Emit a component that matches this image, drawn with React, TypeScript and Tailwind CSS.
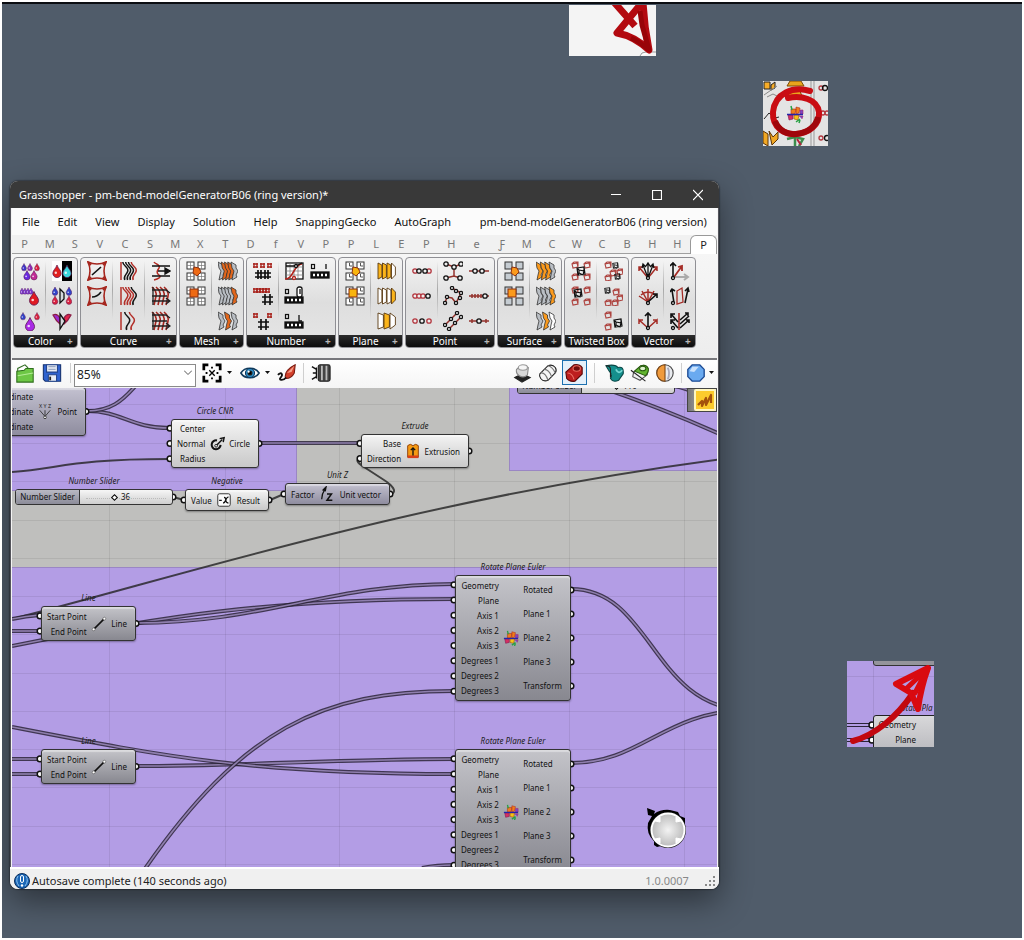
import { Fragment, type ReactNode } from 'react'

type P = { children?: ReactNode }

function Icon({ children }: P) {
  return (
    <svg viewBox="0 0 20 20" className="h-5 w-5 shrink-0" fill="none" stroke="#111" strokeWidth="1.3" aria-hidden="true">
      {children}
    </svg>
  )
}

/* ---------- ribbon icons ---------- */

function Drop({ x, y, s = 1, c }: { x: number; y: number; s?: number; c: string }) {
  return (
    <g transform={`translate(${x} ${y}) scale(${s})`}>
      <path d="M0 -5 C1 -2 3.5 -.5 3.5 2 A3.5 3.5 0 0 1 -3.5 2 C-3.5 -.5 -1 -2 0 -5Z" fill={c} stroke="#5b1650" strokeWidth=".6" />
      <circle cx="-1" cy="1.5" r="1" fill="#fff" fillOpacity=".8" stroke="none" />
    </g>
  )
}

function Waves({ colors }: { colors: string[] }) {
  const step = 13 / (colors.length - 1)
  return (
    <Icon>
      {colors.map((c, i) => (
        <path
          key={i}
          d={`M${i * step} 1 l5 3 0 3 2 3 -2 4 1 2 -5 3 1 -5 1 -4 -2 -3z`}
          fill={c}
          stroke="#333"
          strokeWidth=".8"
        />
      ))}
    </Icon>
  )
}

function Fins({ colors }: { colors: string[] }) {
  const step = 18 / colors.length
  return (
    <Icon>
      {colors.map((c, i) => (
        <path key={i} d={`M${1 + i * step} 2 l${step - 0.6} ${i === colors.length - 1 ? 4 : 2} V${i === colors.length - 1 ? 14 : 16} L${1 + i * step} 18z`} fill={c} stroke="#5a3a12" strokeWidth=".9" />
      ))}
    </Icon>
  )
}

function CurveLines({ colors }: { colors: string[] }) {
  const step = 14 / colors.length
  return (
    <Icon>
      {colors.map((c, i) => (
        <path
          key={i}
          d={i === 0 ? 'M2 1 V19' : `M${1 + i * step} 1 c0 4 6 5 5 9 s-5 5 -3 9`}
          stroke={c}
          strokeWidth="1.5"
        />
      ))}
    </Icon>
  )
}

function Arrows({ dense }: { dense?: boolean }) {
  return (
    <Icon>
      {dense ? (
        <>
          {[1, 5, 9, 13].map((x) => (
            <path key={x} d={`M${x} 1 q5 4 4 9 t-2 9`} stroke="#a5251d" strokeWidth="1.6" />
          ))}
          <path d="M1 4 H15 L19 7 M1 10 H16 M1 15 H19 M2 1v18 M15 12 l4 3 -4 3" stroke="#222" />
        </>
      ) : (
        <>
          <path d="M3 1 C4 3 10 4 8 7 S5 12 8 14 S7 18 3 19" stroke="#b22a22" strokeWidth="1.5" />
          <path d="M1 5 H19 M7 10 H17 M1 15 H19" />
          <path d="M14 7 l5 3 -5 3z" fill="#111" />
        </>
      )}
    </Icon>
  )
}

function Star({ s }: { s?: boolean }) {
  return (
    <Icon>
      <path d="M1 1 Q10 5 19 1 Q15 10 19 19 Q10 15 1 19 Q5 10 1 1Z" stroke="#a5251d" strokeWidth="1.6" />
      <path d="M1 1 l3 3 M19 1 l-3 3 M1 19 l3 -3 M19 19 l-3 -3" stroke="#a5251d" strokeWidth="2" />
      <path d={s ? 'M5 11 C9 11 11 10 14 6' : 'M5 14 L14 6'} strokeWidth="1.6" />
    </Icon>
  )
}

function Tiles({ kind, corner }: { kind: 'mesh' | 'plane' | 'surface'; corner?: boolean }) {
  const accent = { mesh: '#ee6a14', plane: '#f9b50f', surface: '#fb9a1c' }[kind]
  const cells = [[1, 1], [12, 1], [1, 12], [12, 12]]
  return (
    <Icon>
      {cells.map(([x, y]) => (
        <g key={`${x}-${y}`} strokeWidth="1">
          <rect x={x} y={y} width="7" height="7" fill={kind === 'surface' ? '#c5ccd2' : '#fff'} stroke="#333" />
          {kind === 'mesh' && <path d={`M${x + 3.5} ${y} v7 M${x} ${y + 3.5} h7`} stroke="#777" strokeWidth=".7" />}
          {kind === 'plane' && <path d={`M${x + 3.5} ${y + 1} v3 h2.5`} stroke="#555" />}
        </g>
      ))}
      {corner ? (
        <rect x="4" y="3" width="8" height="8" fill={accent} stroke="#8c2f10" strokeWidth="1" />
      ) : (
        <path d="M8 6 l5 1 2 4 -4 4 -4 -3z" fill={accent} stroke="#8c2f10" strokeWidth="1" />
      )}
    </Icon>
  )
}

function Hash({ mode }: { mode: number }) {
  const reds = [[[1, 4], [8, 4], [15, 4]], [[1, 4], [4, 4], [7, 4], [10, 4], [13, 4]], [[1, 4], [15, 4]]][mode]
  const x = [5, 9, 5][mode]
  return (
    <Icon>
      {reds.map(([a, b]) => (
        <path key={a} d={`M${a - 1} ${b - 1}h5 M${a - 1} ${b + 2}h5 M${a} ${b - 2}v5 M${a + 3} ${b - 2}v5`} stroke="#a8231c" strokeWidth="1.3" />
      ))}
      {mode === 0 ? (
        <path d="M2 12h16 M2 16h16 M5 9v9 M8 9v9 M12 9v9 M15 9v9" strokeWidth="1.7" />
      ) : (
        <path d={`M${x} 11h11 M${x} 16h11 M${x + 3} 8v11 M${x + 8} 8v11`} strokeWidth="1.7" />
      )}
    </Icon>
  )
}

function Ruler({ mode }: { mode: number }) {
  return (
    <Icon>
      <rect x="1" y="11" width="18" height="6" fill="#111" />
      <path d="M3 14h2 M7 14h2 M11 14h2 M15 14h2" stroke="#fff" strokeWidth="2.5" />
      <rect x="1.5" y="3.5" width="3" height="4" strokeWidth="1.2" />
      {mode === 1 && <rect x="13" y="1" width="5" height="10" rx="2" fill="#fff" />}
      <path d={mode === 2 ? 'M15 4v6h3' : 'M16 3v5'} />
    </Icon>
  )
}

function Graph() {
  return (
    <Icon>
      <rect x="2" y="2" width="17" height="16" fill="#fff" />
      <path d="M6 2v16 M10 2v16 M14 2v16 M2 6h17 M2 10h17 M2 14h17" stroke="#777" strokeWidth=".7" />
      <path d="M1 18 C10 18 9 4 18 3" stroke="#b3261e" strokeWidth="1.7" />
      <path d="M2 5h10 l6 -3" />
      <circle cx="12" cy="5" r="1.5" fill="#fff" />
      <circle cx="10" cy="17" r="1.5" fill="#fff" stroke="#b3261e" />
    </Icon>
  )
}

function Dots({ pts, line, red = [] }: { pts: number[][]; line?: string; red?: number[] }) {
  return (
    <Icon>
      {line && <path d={line} stroke="#93322c" strokeWidth="1.5" />}
      {pts.map(([x, y], i) => (
        <circle key={i} cx={x} cy={y} r={pts.length > 5 ? 1.6 : 2.2} fill="#eee" stroke={red.includes(i) ? '#b3363e' : '#111'} />
      ))}
    </Icon>
  )
}

function Twist({ mode }: { mode: number }) {
  const cells = mode < 2 ? [[0, 0], [12, 0], [0, 12], [12, 12]] : mode === 4 ? [[1, 0], [1, 12]] : mode === 3 ? [[9, 2], [13, 8], [8, 13], [1, 13]] : [[1, 0], [13, 7], [6, 8], [1, 13]]
  const blacks = [[[5, 5]], [[2, 2]], [[9, 1], [11, 12]], [[1, 1]], [[10, 7]]][mode]
  return (
    <Icon>
      {cells.map(([x, y]) => (
        <path key={`${x}-${y}`} d={`M${x + 1} ${y + 3}l5 -1 1 4 -5 1z M${x + 3} ${y + 1}h4v4 M${x + 1} ${y + 3}l2 -2 M${x + 6} ${y + 2}l1 -1`} stroke="#ae4541" strokeWidth="1.1" />
      ))}
      {blacks.map(([x, y]) => {
        const k = mode < 2 || mode === 4 ? 1 : 0.7
        return (
          <g key={x} transform={`translate(${x} ${y}) scale(${k})`}>
            <path d="M1 2 l7 -1 1 7 -7 1z M3 4 l5 1 -1 4 -4 -2z M1 2l2 2 M8 1v4 M2 9l1 -2" strokeWidth="1.2" />
          </g>
        )
      })}
    </Icon>
  )
}

function Fan({ mode }: { mode: number }) {
  const red = '#a52d27'
  const art = [
    <>
      <path d="M10 17 L1 6 M10 17 L19 6 M1 10V6h4 M19 10V6h-4" stroke={red} strokeWidth="1.5" />
      <path d="M10 17 L5 4 M10 17 V3 M10 17 L15 4 M4 7l1-4 3 3 M8 5l2-3 2 3 M12 6l3-3 1 4" />
    </>,
    <>
      <path d="M10 16 L1 10 M10 16 L4 5 M10 16 V3 M10 16 L16 5 M3 9 Q10 3 17 9" stroke={red} strokeWidth="1.5" />
      <path d="M10 16 L19 8 M15 8h4v4" strokeWidth="1.6" />
    </>,
    <>
      <path d="M10 17 L1 9v4 M10 17 L19 9v4 M1 9h4 M19 9h-4" stroke={red} strokeWidth="1.5" />
      <path d="M10 17 V2 M7 5l3-3 3 3" strokeWidth="1.6" />
    </>,
    <>
      <path d="M3 16H18 M14 13l4 3-4 3" stroke="#aaa" strokeWidth="2" />
      <path d="M4 16 L12 5 M8 6l4-1v5" stroke={red} strokeWidth="1.8" />
      <path d="M3 17 V3 M0 5l3-3 3 3" strokeWidth="1.6" />
    </>,
    <>
      <path d="M7 5 L12 2 13 16 7 18Z" stroke={red} />
      <path d="M4 17 L2 4 M0 6l2-3 3 2 M15 17 L18 3 M15 5l3-3 1 4" strokeWidth="1.6" />
    </>,
    <>
      <path d="M9 2v17" stroke={red} strokeWidth="1.6" />
      <path d="M8 17 L1 9 M8 11 L1 3 M1 7V3h4 M1 13V9h4 M10 17 L19 9 M10 13 L19 5 M10 9 L18 2 M15 2h3v3 M16 9h3v3" strokeWidth="1.6" />
    </>,
  ][mode]
  return (
    <Icon>
      {art}
      <circle cx={mode >= 3 ? 3 : 10} cy="17" r="1.5" fill="#fff" />
    </Icon>
  )
}

const ORANGE = '#e2661b'
const STEEL = '#b9bec4'

const colorIcons = [
  [
    <Icon>
      <Drop x={4} y={6} s={0.7} c="#3d36c9" />
      <Drop x={10} y={6} s={0.7} c="#8c2bb5" />
      <Drop x={17} y={6} s={0.7} c="#d9223f" />
      <Drop x={7} y={14} s={0.9} c="#6a2ae0" />
      <Drop x={14} y={14} s={0.9} c="#c22a96" />
    </Icon>,
    <Icon>
      {[2, 5, 8, 11].map((x) => (
        <Drop key={x} x={x} y={5} s={0.6} c="#7d3bd0" />
      ))}
      <Drop x={14} y={12} s={1.3} c="#e01a22" />
    </Icon>,
    <Icon>
      <Drop x={3} y={5} s={0.7} c="#3144c9" />
      <Drop x={17} y={5} s={0.7} c="#d9223f" />
      <Drop x={10} y={13} s={1.3} c="#a92be6" />
    </Icon>,
  ],
  [
    <Icon>
      <rect width="10" height="20" fill="#fff" stroke="none" />
      <rect x="10" width="10" height="20" fill="#000" stroke="none" />
      <Drop x={5} y={10} s={1.2} c="#e0201f" />
      <Drop x={15} y={10} s={1.2} c="#3bd6dc" />
    </Icon>,
    <Icon>
      <Drop x={3} y={5} s={0.8} c="#3144c9" />
      <Drop x={3} y={14} s={0.8} c="#d9223f" />
      <Drop x={17} y={5} s={0.8} c="#3144c9" />
      <Drop x={17} y={14} s={0.8} c="#d9223f" />
      <path d="M8 3 L12 7 V13 L8 17Z" fill="#d5d9dd" />
    </Icon>,
    <Icon>
      <path d="M1 4 Q5 2 8 7 L8 13 Q4 10 1 4Z" fill="#9a2bd0" stroke="#8a1d45" />
      <path d="M19 4 Q15 2 12 7 L12 13 Q16 10 19 4Z" fill="#e0244a" stroke="#8a1d45" />
      <path d="M8 3 L13 10 L8 18Z" fill="#d5d9dd" />
    </Icon>,
  ],
]

const R = '#b3302a'
const K = '#151515'
type PanelDef = { name: string; blocks: ReactNode[][][] }

// each block is a set of icon columns, blocks are split by a divider
const panels: PanelDef[] = [
  { name: 'Color', blocks: colorIcons.map((c) => [c]) },
  {
    name: 'Curve',
    blocks: [
      [[<Star />, <Star s />]],
      [[<CurveLines colors={[R, K, K, K, R]} />, <CurveLines colors={[R, R, R, R, K]} />, <CurveLines colors={[R, K, R]} />]],
      [[<Arrows />, <Arrows dense />, <Arrows dense />]],
    ],
  },
  {
    name: 'Mesh',
    blocks: [
      [[<Tiles kind="mesh" />, <Tiles kind="mesh" corner />]],
      [[
        <Waves colors={[STEEL, ORANGE, ORANGE, ORANGE, STEEL]} />,
        <Waves colors={[STEEL, STEEL, STEEL, STEEL, ORANGE]} />,
        <Waves colors={[STEEL, ORANGE, STEEL]} />,
      ]],
    ],
  },
  {
    name: 'Number',
    blocks: [
      [[<Hash mode={0} />, <Hash mode={1} />, <Hash mode={2} />]],
      [[<Graph />, <Ruler mode={1} />, <Ruler mode={2} />], [<Ruler mode={0} />]],
    ],
  },
  {
    name: 'Plane',
    blocks: [
      [[<Tiles kind="plane" />, <Tiles kind="plane" corner />]],
      [[
        <Fins colors={['#fbb41a', '#fbb41a', '#fbb41a', '#fff']} />,
        <Fins colors={['#fff', '#fff', '#fff', '#fbb41a']} />,
        <Fins colors={['#fff', '#fbb41a', '#fff']} />,
      ]],
    ],
  },
  {
    name: 'Point',
    blocks: [
      [[
        <Dots pts={[[3, 10], [17, 10], [7, 10], [13, 10]]} red={[0, 1]} />,
        <Dots pts={[[3, 10], [7, 10], [11, 10], [16, 10]]} red={[0, 1, 2]} />,
        <Dots pts={[[3, 10], [10, 10], [17, 10]]} red={[0, 2]} />,
      ]],
      [
        [
          <Dots pts={[[3, 17], [11, 6], [18, 3], [3, 3], [17, 17]]} line="M3 3 L11 6 L18 3 M3 17 L11 15 L17 17 M11 6 V15" />,
          <Dots pts={[[2, 17], [4, 11], [9, 2], [13, 5], [18, 7], [17, 12], [13, 17]]} line="M2 17 L4 11 L9 12 L13 17 L18 7 L9 2" />,
          <Dots pts={[[2, 14], [8, 8], [14, 2], [6, 18], [12, 12], [18, 6]]} line="M2 14 L14 2 M6 18 L18 6" />,
        ],
        [
          <Dots pts={[[6, 10], [13, 10]]} line="M0 10 H20" />,
          <Dots pts={[[16, 10]]} line="M0 10 H20 M3 8v4 M6 8v4 M9 8v4 M12 8v4" />,
          <Dots pts={[[10, 10]]} line="M0 10 H20 M3 8v4 M17 8v4" />,
        ],
      ],
    ],
  },
  {
    name: 'Surface',
    blocks: [
      [[<Tiles kind="surface" />, <Tiles kind="surface" corner />]],
      [[
        <Waves colors={['#fb9a1c', '#fb9a1c', '#fb9a1c', STEEL]} />,
        <Waves colors={[STEEL, STEEL, STEEL, '#fb9a1c']} />,
        <Waves colors={[STEEL, '#fb9a1c', '#fff']} />,
      ]],
    ],
  },
  {
    name: 'Twisted Box',
    blocks: [
      [[<Twist mode={0} />, <Twist mode={1} />]],
      [[<Twist mode={2} />, <Twist mode={3} />, <Twist mode={4} />]],
    ],
  },
  {
    name: 'Vector',
    blocks: [
      [[<Fan mode={0} />, <Fan mode={1} />, <Fan mode={2} />]],
      [[<Fan mode={3} />, <Fan mode={4} />, <Fan mode={5} />]],
    ],
  },
]

function RibbonPanel({ name, blocks }: PanelDef) {
  return (
    <section className="flex h-[91px] shrink-0 flex-col overflow-hidden rounded-[4px] border border-[#8f8f94] bg-linear-to-b from-[#f4f4f4] via-[#dedede] to-[#e6e6e6]">
      <div className="flex flex-1 pt-[3px]">
        {blocks.map((cols, i) => (
          <Fragment key={i}>
            {i > 0 && <div className="mb-4 w-px bg-linear-to-b from-transparent via-[#a9a9a9] to-transparent" />}
            <div className={cols.length > 1 ? 'flex w-14 justify-center gap-1.5' : 'flex w-[31px] justify-center'}>
              {cols.map((icons, j) => (
                <div key={j} className="flex flex-col gap-[5px]">
                  {icons.map((icon, k) => (
                    <Fragment key={k}>{icon}</Fragment>
                  ))}
                </div>
              ))}
            </div>
          </Fragment>
        ))}
      </div>
      <h2 className="flex h-3 w-full items-center justify-center bg-linear-to-b from-[#2c2c2c] to-[#0c0c0c] text-[10px] leading-3 text-white">
        <span className="flex-1 text-center whitespace-nowrap">{name}</span>
        {name !== 'Twisted Box' && <span className="mr-1 w-1.5 font-bold text-[#b8b8b8]">+</span>}
      </h2>
    </section>
  )
}

/* ---------- toolbar ---------- */

function Caret() {
  return (
    <svg viewBox="0 0 5 3" className="h-[3px] w-[5px] shrink-0" aria-hidden="true">
      <path d="M0 0h5L2.5 3z" fill="#111" />
    </svg>
  )
}

function Tool({ label, active, children }: P & { label: string; active?: boolean }) {
  return (
    <button
      type="button"
      aria-label={label}
      className={
        active
          ? 'flex size-[25px] shrink-0 items-center justify-center border border-[#1c70b0] bg-[#e4f0fa]'
          : 'flex size-[25px] shrink-0 items-center justify-center'
      }
    >
      <svg viewBox="0 0 22 22" className="size-5 shrink-0" fill="none" stroke="#222" strokeWidth="1.2" aria-hidden="true">
        {children}
      </svg>
    </button>
  )
}

function Divider() {
  return <div className="h-5 w-px shrink-0 bg-[#cfcfcf]" />
}

function Toolbar() {
  return (
    <div className="flex h-[30px] items-center border-t-2 border-[#77777b] bg-linear-to-b from-white to-[#f5f5f5] pb-[3px]">
      <Tool label="Open">
        <path d="M3 20 V6 l8 -4 3 3 v4 h5 v11z" fill="#fff" stroke="#356d26" />
        <path d="M2 9 l8 -1 2 -2 h8 v15 H2z" fill="#6dc745" stroke="#2f6f1d" />
        <path d="M3 14 L20 11" stroke="#b4ec96" />
      </Tool>
      <div className="w-0.5" />
      <Tool label="Save">
        <path d="M1.5 2 h19 v18 h-17 l-2 -2z" fill="#2f62cf" stroke="#173472" />
        <path d="M5 2h12v8H5z M7 13h9v7H7z" fill="#e8edf5" stroke="#24458c" />
        <path d="M7 4h8 M7 7h8" stroke="#9aa9c4" />
        <path d="M9 15v4" strokeWidth="2" />
      </Tool>
      <div className="w-1.5" />
      <Divider />
      <div className="relative ml-[3px] h-[23px] w-[122px] shrink-0">
        <select aria-label="Zoom" defaultValue="85" className="h-full w-full appearance-none border border-[#8a8a8a] bg-white pl-0.5 text-[12px] leading-4 text-[#222]">
          <option value="85">85%</option>
          <option value="100">100%</option>
        </select>
        <svg viewBox="0 0 8 5" className="pointer-events-none absolute top-[9px] right-1 h-[5px] w-2" fill="none" stroke="#555" aria-hidden="true">
          <path d="M0 0.5 L4 4.5 L8 0.5" />
        </svg>
      </div>
      <div className="w-[3px]" />
      <Tool label="Zoom extents">
        <path d="M2 8V2h5 M15 2h5v6 M2 14v6h5 M15 20h5v-6" stroke="#000" strokeWidth="3" />
        <path d="M8 8l6 6 M14 8l-6 6" stroke="#000" strokeWidth="1.5" />
        <path d="M11 4v2 M11 16v2 M4 11h2 M16 11h2" stroke="#000" strokeWidth="2" />
      </Tool>
      <div className="w-[3px]" />
      <Caret />
      <div className="w-[5px]" />
      <Tool label="Named views">
        <path d="M1 11 C5 4 17 4 21 11 C17 18 5 18 1 11Z" fill="#fff" stroke="#103a5c" strokeWidth="1.8" />
        <circle cx="11" cy="11" r="5" fill="#2b8ec9" stroke="#0c3558" />
        <circle cx="11" cy="11" r="2.2" fill="#000" />
        <circle cx="9.5" cy="9.5" r="1.2" fill="#fff" stroke="none" />
      </Tool>
      <div className="w-[3px]" />
      <Caret />
      <div className="w-1" />
      <Tool label="Sketch">
        <path d="M9 15 C9 10 14 5 20 2 L19 11 C17 15 13 17 10 17Z" fill="#d3402c" stroke="#7a1c12" />
        <path d="M11 11 L19 3 L16 10Z" fill="#f4a08a" stroke="none" />
        <path d="M1 13 C5 9 7 13 4 16 S7 20 10 16" stroke="#111" strokeWidth="2" />
      </Tool>
      <div className="w-1" />
      <Divider />
      <div className="w-1" />
      <Tool label="Cluster">
        <rect x="8" y="2" width="13" height="18" rx="2" fill="#444" />
        <path d="M12 3v16 M17 3v16" stroke="#bbb" strokeWidth="2" />
        <path d="M1 4 l5 3 M1 18 l5 -3 M6 5v12 M2 11h4" stroke="#111" strokeWidth="1.5" />
      </Tool>

      <div className="flex-1" />
      <Tool label="No preview">
        <path d="M3 16 L11 12 L20 16 L11 21Z" fill="#222" />
        <path d="M5 7 Q4 12 8 14 Q13 17 17 13 L18 5 Q12 0 5 7Z" fill="#d8d8d8" stroke="#8b8b8b" />
        <ellipse cx="12" cy="5" rx="5" ry="3" fill="#f6f6f6" stroke="#999" />
      </Tool>
      <div className="w-px" />
      <Tool label="Wireframe preview">
        <path d="M2 12 L11 3 Q16 1 19 5 Q21 8 19 11 L11 19 Q6 21 3 17 Q1 14 2 12Z" fill="#f5f5f5" />
        <path d="M3 11 Q8 10 11 19 M7 7 Q12 7 15 15 M11 3 Q16 4 19 11" stroke="#777" />
      </Tool>
      <div className="w-px" />
      <Tool label="Shaded preview" active>
        <path d="M2 10 L11 2 Q17 1 20 5 L20 12 L12 20 Q6 21 3 17Z" fill="#bd1e1e" stroke="#5b0808" />
        <ellipse cx="14" cy="6" rx="4" ry="3" fill="#6f0c0c" stroke="#e76a5e" />
        <path d="M4 11 Q9 11 11 18" stroke="#ec7468" />
      </Tool>
      <div className="w-[7px]" />
      <Divider />
      <div className="w-2" />
      <Tool label="Preview selected only">
        <path d="M1 3 Q12 1 14 5 Q21 3 20 12 L15 19 Q9 22 6 17 Q9 13 4 8Z" fill="#158f8c" stroke="#0a4746" />
        <path d="M12 7 Q15 13 19 8" stroke="#73d6d2" strokeWidth="2" />
        <path d="M1 3 Q6 3 6 7 T6 16" />
      </Tool>
      <Tool label="Document preview">
        <path d="M4 10 L12 3 Q17 1 20 6 L19 13 L11 19 L3 15Z" fill="#f2f2f2" stroke="#555" />
        <path d="M5 9 L12 3 Q18 1 20 6 Q21 10 17 14Z" fill="#62b52f" stroke="#2a5d10" />
        <ellipse cx="14" cy="6" rx="3.5" ry="2.5" fill="#dff3cf" stroke="#2a5d10" />
        <path d="M1 8 L17 20" />
      </Tool>
      <Tool label="Mesh quality">
        <circle cx="11" cy="11" r="9" fill="#e9ebef" stroke="#444" />
        <path d="M11 2 A9 9 0 0 0 11 20Z" fill="#f09a3c" stroke="#7e4714" />
        <path d="M14 5 Q17 11 14 18" stroke="#aab" strokeWidth="2" />
      </Tool>
      <div className="w-[3px]" />
      <Divider />
      <div className="w-0.5" />
      <Tool label="Display">
        <path d="M7 2 L15 2 L20 7 L20 15 L15 20 L7 20 L2 15 L2 7Z" fill="#6aaaf0" stroke="#1d4b94" strokeLinejoin="round" strokeWidth="1.5" />
        <path d="M7 4 L14 4 L9 10 L4 9Z" fill="#c9e1fc" stroke="none" />
      </Tool>
      <Caret />
      <div className="w-[3px]" />
    </div>
  )
}

/* ---------- canvas ---------- */

function EulerArt() {
  return (
    <g>
      <path d="M5 4 h5 l-1 5 h-4z M10 2 l4 1 -1 5 -3 1z" fill="#ef7d1c" stroke="#b02a1a" strokeWidth=".6" />
      <path d="M2 10 h5 v4 l-4 1z" fill="#d62f62" stroke="#7d1450" strokeWidth=".6" />
      <path d="M8 10 h5 l-1 5 -4 -1z" fill="#f4c518" stroke="#a4400e" strokeWidth=".6" />
      <path d="M14 5 h3 v4 h-3z M13 11 h4 l-1 3" fill="#7a45c8" stroke="#b02a5a" strokeWidth=".6" />
      <path d="M1 9.5 h16" stroke="#2325a8" strokeWidth="1.5" />
      <path d="M5 1 l1 4 M10 17 l4 -3 M14 15 l-1 3" stroke="#27a244" strokeWidth="1.5" />
    </g>
  )
}

const nodeArt: Record<string, ReactNode> = {
  circle: (
    <>
      <path d="M9 5 A5 5 0 1 0 13 10" stroke="#111" strokeWidth="2.3" />
      <path d="M8 11 L15 4 M12 3 l5 -1 -1 5" stroke="#111" strokeWidth="1.6" />
      <circle cx="8" cy="11" r="1.5" fill="#fff" stroke="#111" />
    </>
  ),
  extrude: (
    <>
      <path d="M3 3 Q6 0 9 3 Q12 0 15 3 V16 H3Z" fill="#f59a13" stroke="#8a3b07" />
      <path d="M3 14h12v3H3z" fill="#d9401a" />
      <path d="M9 14 V6 M6.5 8 L9 5.5 L11.5 8" stroke="#111" strokeWidth="1.5" />
    </>
  ),
  negative: (
    <>
      <rect x="2" y="2" width="14" height="14" rx="2" fill="#fafafa" stroke="#222" />
      <path d="M3.5 9.5h3 M8 12.5 Q10 12 11 9 T14 5.5 M9 6 Q11 6 11 9 T14 12.5" stroke="#111" strokeWidth="1.4" />
    </>
  ),
  unit: (
    <>
      <path d="M3 15 Q3 9 7 3 M4 5 L8 1 L7 6" stroke="#111" strokeWidth="1.4" />
      <path d="M9 9 h5 l-5 7 h6" stroke="#111" strokeWidth="1.7" />
    </>
  ),
  line: (
    <>
      <path d="M3 15 L15 3" stroke="#111" strokeWidth="1.8" />
      <circle cx="3" cy="15" r="1.6" fill="#fff" stroke="#444" strokeWidth=".6" />
      <circle cx="15" cy="3" r="1.6" fill="#fff" stroke="#444" strokeWidth=".6" />
    </>
  ),
  xyz: (
    <>
      <text x="9" y="5" fontSize="6" textAnchor="middle" fill="#222">X Y Z</text>
      <path d="M3 7 L9 14 L15 7 M9 7v6" stroke="#333" strokeWidth="1" />
      <circle cx="9" cy="15" r="1.5" fill="#fff" stroke="#333" />
    </>
  ),
  euler: <EulerArt />,
}

type NodeDef = {
  title: string
  icon: string
  x: number
  y: number
  w: number
  h: number
  inputs: string[]
  outputs: string[]
  // distance between two output rows
  outStep?: number
  tone: 'light' | 'gray' | 'dim'
}

const eulerIn = ['Geometry', 'Plane', 'Axis 1', 'Axis 2', 'Axis 3', 'Degrees 1', 'Degrees 2', 'Degrees 3']
const eulerOut = ['Rotated', 'Plane 1', 'Plane 2', 'Plane 3', 'Transform']

const nodes: NodeDef[] = [
  { title: '', icon: 'xyz', x: -32, y: -1, w: 106, h: 49, inputs: ['X coordinate', 'Y coordinate', 'Z coordinate'], outputs: ['Point'], tone: 'dim' },
  { title: 'Circle CNR', icon: 'circle', x: 159, y: 31, w: 88, h: 49, inputs: ['Center', 'Normal', 'Radius'], outputs: ['Circle'], tone: 'light' },
  { title: 'Extrude', icon: 'extrude', x: 349, y: 46, w: 108, h: 34, inputs: ['Base', 'Direction'], outputs: ['Extrusion'], tone: 'light' },
  { title: 'Negative', icon: 'negative', x: 173, y: 101, w: 84, h: 22, inputs: ['Value'], outputs: ['Result'], tone: 'light' },
  { title: 'Unit Z', icon: 'unit', x: 273, y: 95, w: 105, h: 22, inputs: ['Factor'], outputs: ['Unit vector'], tone: 'dim' },
  { title: 'Line', icon: 'line', x: 29, y: 218, w: 95, h: 35, inputs: ['Start Point', 'End Point'], outputs: ['Line'], tone: 'gray' },
  { title: 'Line', icon: 'line', x: 29, y: 361, w: 95, h: 35, inputs: ['Start Point', 'End Point'], outputs: ['Line'], tone: 'gray' },
  { title: 'Rotate Plane Euler', icon: 'euler', x: 443, y: 187, w: 116, h: 126, inputs: eulerIn, outputs: eulerOut, outStep: 24, tone: 'gray' },
  { title: 'Rotate Plane Euler', icon: 'euler', x: 443, y: 361, w: 116, h: 126, inputs: eulerIn, outputs: eulerOut, outStep: 24, tone: 'gray' },
]

const tones = {
  light: 'from-[#f4f4f4] to-[#c9c9c9]',
  gray: 'from-[#c4c4c9] to-[#888890]',
  dim: 'from-[#c3c1d0] to-[#8f8d9f]',
}

function rowYs(y: number, h: number, count: number, step: number) {
  return Array.from({ length: count }, (_, i) => y + h / 2 + (i - (count - 1) / 2) * step)
}

function GraphNode({ n }: { n: NodeDef }) {
  return (
    <div className="absolute" style={{ left: n.x, top: n.y, width: n.w, height: n.h }}>
      <div className="absolute inset-x-0 -top-3.5 text-center text-[8px] leading-3 whitespace-nowrap text-[#222] italic">{n.title}</div>
      <div className={`flex h-full items-center justify-between rounded-[3px] border border-[#333] bg-linear-to-b px-[5px] text-[8px] leading-[15px] whitespace-nowrap text-[#111] shadow-[inset_0_2px_1px_#ffffff66,0_1px_2px_#0005] ${tones[n.tone]}`}>
        <div className="flex flex-col items-end">
          {n.inputs.map((t) => (
            <span key={t}>{t}</span>
          ))}
        </div>
        <svg viewBox="0 0 18 18" className="size-4 shrink-0" fill="none" aria-hidden="true">
          {nodeArt[n.icon]}
        </svg>
        <div className={n.outStep ? 'flex flex-col pr-[3px] leading-6' : 'flex flex-col pr-[3px]'}>
          {n.outputs.map((t) => (
            <span key={t}>{t}</span>
          ))}
        </div>
      </div>
    </div>
  )
}

function SliderNode({ x, y, title, value }: { x: number; y: number; title?: boolean; value: number }) {
  return (
    <div className="absolute w-[158px]" style={{ left: x, top: y }}>
      {title && <div className="absolute inset-x-0 -top-3.5 text-center text-[8px] leading-3 text-[#222] italic">Number Slider</div>}
      <div className="flex h-4 items-center overflow-hidden rounded-[3px] border border-[#333] bg-linear-to-b from-[#f6f6f6] to-[#cfcfcf] text-[8px] leading-3 text-[#111]">
        <div className="flex h-full w-16 items-center justify-center border-r border-[#333] bg-linear-to-b from-[#b9b9c4] to-[#8c8c99] whitespace-nowrap">
          Number Slider
        </div>
        <div className="relative flex flex-1 items-center gap-1 pl-8">
          <span className="absolute inset-x-1.5 top-1 h-1 border-b border-dotted border-[#bbb]" />
          <span className="size-[5px] rotate-45 border border-black bg-white" />
          <span>{value}</span>
        </div>
      </div>
    </div>
  )
}

const doubleWires = [
  'M75 23 C110 23 118 40 158 40',
  'M75 23 C98 23 110 14 126 -5',
  'M248 55 H348',
  'M0 231 Q14 228 28 227',
  'M0 243 H28',
  'M0 258 C150 228 260 211 442 211',
  'M125 235 C250 235 318 196 442 196',
  'M0 371 H28',
  'M0 386 H28',
  'M125 378 C230 378 330 371 442 371',
  'M0 339 C150 368 240 386 442 386',
  'M130 485 C230 340 310 303 442 303',
  'M559 201 C640 201 640 320 735 322',
  'M559 375 C630 375 650 324 735 322',
  'M585 -2 Q650 20 710 47',
  'M661 -2 Q675 0 690 8',
  'M410 480 Q425 477 442 477',
]

const singleWires = [
  'M0 84 C50 80 60 71 158 71',
  'M0 231 C170 188 400 112 710 71',
  'M161 109 L172 112',
  'M258 112 L272 106',
  'M379 106 C386 104 380 97 372 92 L352 79 C344 74 344 71 348 71',
]

const gridX = [97, 213, 327, 442, 557, 672]
const gridY = [16, 55, 93, 132, 170, 208, 246, 285, 323, 361, 399, 438, 476]

function Wires() {
  const ports: number[][] = [[161, 109]]
  nodes.forEach((n) => {
    rowYs(n.y, n.h, n.inputs.length, 15.2).forEach((y) => ports.push([n.x - 1, y]))
    rowYs(n.y, n.h, n.outputs.length, n.outStep ?? 15).forEach((y) => ports.push([n.x + n.w, y]))
  })
  return (
    <svg className="absolute inset-0 h-full w-full" fill="none" aria-hidden="true">
      {gridX.map((x) => (
        <path key={x} d={`M${x}.5 0 V480`} stroke="#000" strokeOpacity=".07" />
      ))}
      {gridY.map((y) => (
        <path key={y} d={`M0 ${y}.5 H2000`} stroke="#000" strokeOpacity=".07" />
      ))}
      {singleWires.map((d) => (
        <path key={d} d={d} stroke="#222" strokeOpacity=".8" strokeWidth="2" />
      ))}
      {doubleWires.map((d) => (
        <g key={d}>
          <path d={d} stroke="#2b2438" strokeOpacity=".85" strokeWidth="4" />
          <path d={d} stroke="#8f7fae" strokeWidth="1.6" />
        </g>
      ))}
      {ports.map(([x, y], i) => (
        <circle key={i} cx={x} cy={y} r="2.8" fill="#fff" stroke="#111" strokeWidth="1.5" />
      ))}
    </svg>
  )
}

function Compass() {
  return (
    <svg viewBox="0 0 44 44" className="absolute right-7 bottom-4 size-11" aria-hidden="true">
      <path d="M2 1 L10 4 L9 7 Q16 2 25 3 L33 5 L35 9 L40 11 V17 L36 34 L12 40 L9 38 V34 Q1 27 3 16 L7 9 L3 8Z" fill="#000" />
      <circle cx="23" cy="23" r="18" fill="#222" />
      <circle cx="23" cy="23" r="16.5" fill="url(#knob)" stroke="#fff" strokeWidth="2" />
      <path d="M10 14 l5 1 0 -5z M31 10 l0 5 5 -1z M10 32 l5 -1 0 5z M36 32 l-5 -1 0 5z" fill="#fff" stroke="#fff" />
      <defs>
        <radialGradient id="knob">
          <stop offset="0" stopColor="#f3f3f3" />
          <stop offset="1" stopColor="#bcbcbc" />
        </radialGradient>
      </defs>
    </svg>
  )
}

function Canvas() {
  return (
    <div className="relative h-[479px] overflow-hidden bg-[#bfbfbd]">
      <div className="absolute top-0 left-0 h-[103px] w-[285px] border-r border-b border-[#9a86c4] bg-[#b39de5]" />
      <div className="absolute top-0 right-0 left-[497px] h-[83px] border-b border-l border-[#9a86c4] bg-[#b39de5]" />
      <div className="absolute inset-x-0 top-[179px] bottom-0 border-t border-[#9a86c4] bg-[#b39de5]" />
      <Wires />
      {nodes.map((n, i) => (
        <GraphNode key={i} n={n} />
      ))}
      <SliderNode x={3} y={101} title value={36} />
      <SliderNode x={505} y={-10} value={110} />
      <div className="absolute top-0 right-0 flex h-6 w-[30px] justify-end border border-[#444] bg-linear-to-r from-[#777] to-[#ddd]">
        <svg viewBox="0 0 22 22" className="size-[22px]" fill="none" aria-hidden="true">
          <rect x="1" y="1" width="20" height="20" rx="1" fill="#fccb2d" stroke="#fff7c0" strokeWidth="2" />
          <path d="M4 16 L8 12 V17 L12 9 V16 L17 6 V14" stroke="#a4520c" strokeWidth="2.2" strokeLinejoin="round" />
        </svg>
      </div>
      <Compass />
    </div>
  )
}

/* ---------- window ---------- */

const menu = ['File', 'Edit', 'View', 'Display', 'Solution', 'Help', 'SnappingGecko', 'AutoGraph']
const tabs = 'PMSVCSMXTDfVPPLEPHeƑMCWCBHH'.split('')

function GrasshopperWindow() {
  return (
    <div className="ml-2 w-[69.5%] overflow-hidden rounded-lg bg-[#f0f0f0] shadow-[0_12px_32px_#00000073,0_0_2px_#000]">
      <header className="flex h-[27px] items-center bg-[#393939] pl-[9px] text-white">
        <h1 className="flex-1 text-[11px] leading-4 whitespace-nowrap">Grasshopper - pm-bend-modelGeneratorB06 (ring version)*</h1>
        {[
          ['Minimize', 'M0 5.5h10'],
          ['Maximize', 'M.5 1.5h9v9h-9z'],
          ['Close', 'M0 1l10 10M10 1L0 11'],
        ].map(([label, d]) => (
          <button key={label} type="button" aria-label={label} className="flex h-full w-[41px] items-center justify-center">
            <svg viewBox="0 0 10 12" className="h-3 w-2.5" fill="none" stroke="#fff" strokeWidth="1.2">
              <path d={d} />
            </svg>
          </button>
        ))}
      </header>
      <div className="border-x border-[#55555c]">
        <div className="border-x border-[#f4f4f4]">
          <nav className="flex h-[27px] items-center gap-[18px] bg-[#fbfbfb] px-2.5 text-[11px] leading-4 whitespace-nowrap text-[#111]">
            {menu.map((m) => (
              <button key={m} type="button">{m}</button>
            ))}
            <button type="button" className="ml-auto">pm-bend-modelGeneratorB06 (ring version)</button>
          </nav>
          <div className="flex h-[19px] border-b border-[#a0a0a0] bg-[#f1f1f1] text-[11px] leading-[18px] text-[#777]">
            {tabs.map((t, i) => (
              <button key={i} type="button" className="flex-1 text-center">{t}</button>
            ))}
            <button type="button" className="-mb-px flex-1 rounded-t-md border border-b-0 border-[#999] bg-white text-center leading-4 text-[#222]">P</button>
          </div>
          <div className="flex h-[104px] gap-0.5 overflow-hidden bg-linear-to-b from-[#f6f6f6] to-[#ededed] pt-[3px] pl-px">
            {panels.map((p) => (
              <RibbonPanel key={p.name} {...p} />
            ))}
          </div>
          <Toolbar />
          <Canvas />
        </div>
      </div>
      <footer className="flex h-[22px] items-center border-t-2 border-white bg-[#f0f0f0] pt-1 pr-1 pl-1 text-[11px] leading-4 text-[#222]">
        <svg viewBox="0 0 16 16" className="mr-0.5 size-4" aria-hidden="true">
          <circle cx="8" cy="8" r="7.5" fill="#1b66b5" stroke="#0d2f5c" />
          <path d="M4 3 Q1 8 5 13 M12 3 Q15 8 11 13" stroke="#8dc3f2" fill="none" />
          <rect x="6.5" y="2.5" width="3" height="7" rx="1.5" fill="#1b66b5" stroke="#fff" />
          <circle cx="8" cy="12.5" r="1.2" fill="#fff" />
        </svg>
        <span className="flex-1">Autosave complete (140 seconds ago)</span>
        <span className="mr-4 text-[11px] text-[#888]">1.0.0007</span>
        <svg viewBox="0 0 10 10" className="size-2.5" fill="#888" aria-hidden="true">
          <path d="M8 0h2v2H8z M4 4h2v2H4z M8 4h2v2H8z M0 8h2v2H0z M4 8h2v2H4z M8 8h2v2H8z" />
        </svg>
      </footer>
    </div>
  )
}

/* ---------- loose clippings on the desktop ---------- */

function ArrowClip() {
  return (
    <svg viewBox="0 0 87 51" className="absolute top-px left-[567px] h-[51px] w-[87px] bg-[#f4f4f4]" fill="none" aria-hidden="true">
      <path d="M71 51 Q72 47 77 47 H87" fill="#fff" stroke="#999" />
      <path d="M44 -4 L66 21 M76 -6 L48 28 Q65 31 80 45 Q75 20 74 -4" stroke="#b30a10" strokeWidth="7" strokeLinejoin="round" />
      <path d="M71 6 L73 20 L80 45 Q70 36 62 33" stroke="#980408" strokeWidth="5" strokeLinejoin="round" />
    </svg>
  )
}

function CircledClip() {
  return (
    <svg viewBox="0 0 65 65" className="absolute top-[77px] left-[761px] size-[65px] bg-[#e4e4e4]" fill="none" aria-hidden="true">
      <path d="M48 0v65 M51 0v65" stroke="#999" />
      <path d="M1 1h6v7H1z M8 4l4 -3 v6 l-4 2z" fill="#f7ac28" stroke="#222" />
      <path d="M1 14 L14 5 M4 16 l6 -3 4 2" stroke="#888" />
      <path d="M27 0h11l3 5H24z M29 8h7l3 7H24z" fill="#e9a51c" stroke="#7c4a08" />
      <path d="M1 38 L6 32 L12 37 L16 36" stroke="#222" />
      <path d="M0 50 l5 3 v12 l-5 -3z M6 50 l4 6 5 -5 v7 l-6 6z" fill="#f0a724" stroke="#5c3407" />
      <path d="M24 58 l8 -2 8 2 -4 7 M32 56 v9" stroke="#3d8d4d" strokeWidth="2.5" />
      <path d="M34 58 l4 6" stroke="#b6223c" strokeWidth="2" />
      <g transform="translate(23 24)">
        <EulerArt />
      </g>
      <g strokeWidth="1.3">
        <circle cx="58" cy="7" r="2" stroke="#b3363e" />
        <circle cx="62" cy="7" r="2.5" stroke="#111" />
        <circle cx="60" cy="32" r="2" stroke="#b3363e" />
        <circle cx="64" cy="32" r="2" stroke="#b3363e" />
        <circle cx="58" cy="57" r="2" stroke="#b3363e" />
        <circle cx="64" cy="57" r="2.5" stroke="#111" />
      </g>
      <path d="M47 10 C30 5 12 12 10 31 C9 47 22 54 33 53 C46 52 57 44 56 31 C54 18 38 14 25 17" stroke="#c90d14" strokeWidth="6" strokeLinecap="round" />
      <path d="M12 40 C16 50 25 54 33 53 C44 52 53 46 55 36" stroke="#a0060b" strokeWidth="6" />
    </svg>
  )
}

function NodeClip() {
  return (
    <div className="absolute top-[657px] left-[845px] h-[86px] w-[87px] overflow-hidden bg-[#b39de5] text-[8px] leading-[15px] text-[#111]">
      <div className="absolute -top-2.5 left-[26px] h-[15px] w-20 rounded-[3px] border border-[#333] bg-[#94949b]" />
      <div className="absolute top-[39px] left-[54px] whitespace-nowrap text-[#222] italic">otate Pla</div>
      <svg viewBox="0 0 87 86" className="absolute inset-0" fill="none" aria-hidden="true">
        <path d="M0 15.5h87 M26.5 0v86" stroke="#000" strokeOpacity=".08" />
        <path d="M0 62.5h25 M0 65.5h25 M0 77.5h25 M0 80.5h25" stroke="#2b2438" strokeWidth="1.2" />
        <circle cx="25" cy="64" r="3" fill="#fff" stroke="#111" strokeWidth="1.5" />
        <circle cx="25" cy="79" r="3" fill="#fff" stroke="#111" strokeWidth="1.5" />
      </svg>
      <div className="absolute top-[54px] left-[26px] flex h-20 w-20 flex-col items-end rounded-[3px] border border-[#222] bg-linear-to-b from-[#d8d8da] to-[#97979e] pt-px pr-9">
        <span>Geometry</span>
        <span>Plane</span>
      </div>
      <svg viewBox="0 0 87 86" className="absolute inset-0" fill="none" strokeLinejoin="round" strokeLinecap="round" aria-hidden="true">
        <path d="M6 80 C28 74 50 56 66 32" stroke="#c2080e" strokeWidth="6" />
        <path d="M81 7 L49 23 L64 32 L71 48 Q74 26 81 7Z" stroke="#d90a10" strokeWidth="6" />
        <path d="M60 27 L81 7 L68 32" stroke="#d90a10" strokeWidth="5" />
      </svg>
    </div>
  )
}

export default function App() {
  return (
    <div className="flex min-h-screen bg-white p-0.5 font-['Noto_Sans','Open_Sans',sans-serif]">
      <main className="relative flex-1 overflow-hidden border-t-2 border-[#0b0d12] bg-[#505c6a] pt-[177px] pb-12">
        <GrasshopperWindow />
        <ArrowClip />
        <CircledClip />
        <NodeClip />
      </main>
    </div>
  )
}
